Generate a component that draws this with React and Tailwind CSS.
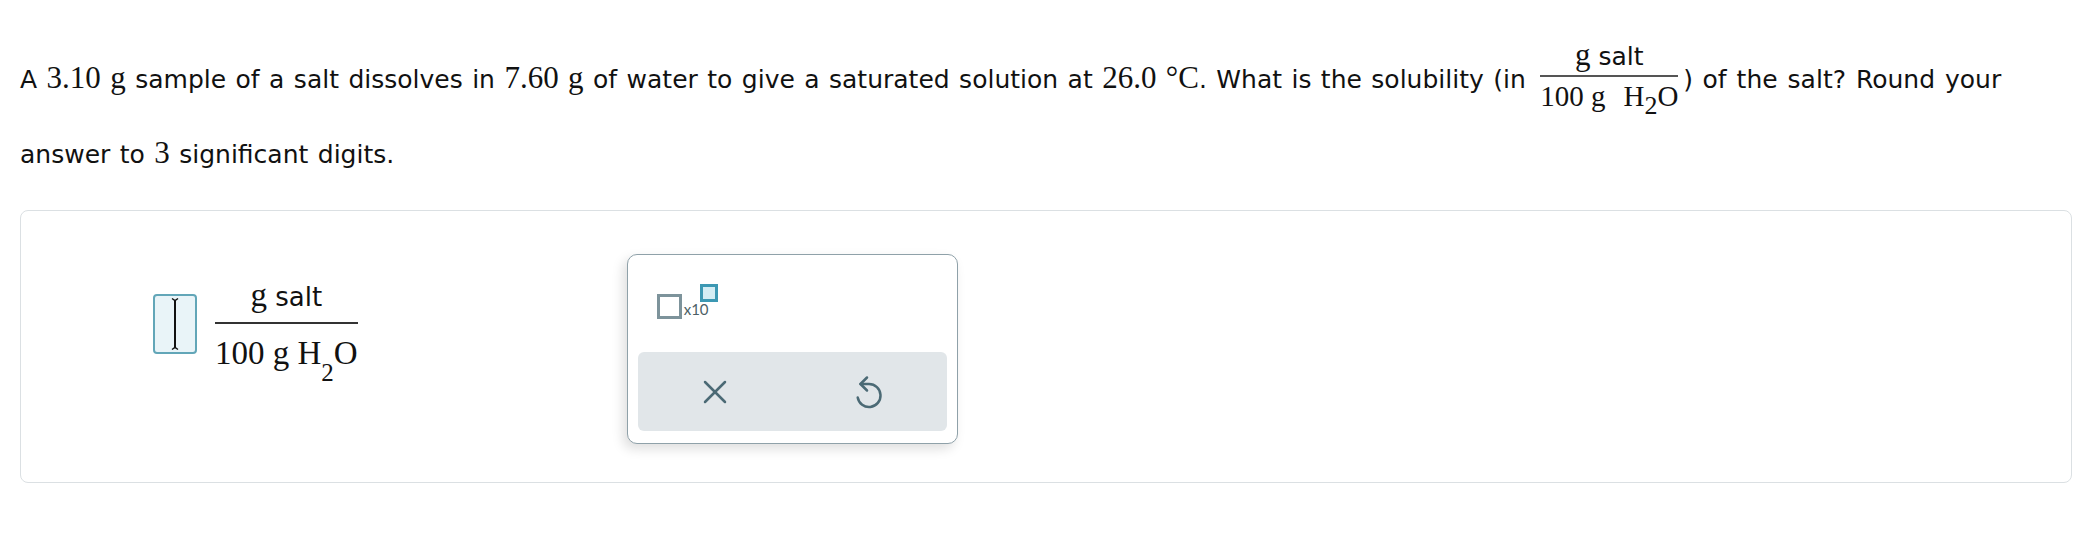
import React from "react";

// serif numbers / units used inside the question text
const Num = ({ children, className = "" }) => (
  <span className={`font-['Liberation_Serif','Times_New_Roman',serif] leading-none ${className}`}>
    {children}
  </span>
);

// fraction inside the question sentence
const InlineFraction = () => (
  <span className="inline-flex flex-col items-center align-[23px] px-[5px] [word-spacing:0px]">
    <span className="block leading-none text-[25px]">
      <Num className="text-[31px]">g</Num> salt
    </span>
    <span className="block h-[2px] w-full bg-[#555] mt-[4.5px]" />
    <span className="block leading-none mt-[5px] whitespace-nowrap">
      <Num className="text-[29px]">
        100 g<span className="ml-[18px]">H</span>
        <span className="relative top-[8px] text-[26px]">2</span>O
      </Num>
    </span>
  </span>
);

// the answer box with the text cursor
const AnswerBox = () => (
  <div className="mt-[15px] w-[44px] h-[60px] rounded-[4px] border-2 border-[#62a6b8] bg-[#e9f4f8] flex items-center justify-center">
    <svg width="12" height="54" viewBox="0 0 12 54" fill="none" stroke="#111" strokeWidth="1.5">
      <path d="M3 1.5 L6 3.5 L9 1.5" />
      <path d="M6 3 V51" strokeWidth="2" />
      <path d="M3 52.5 L6 50.5 L9 52.5" />
    </svg>
  </div>
);

const CloseIcon = () => (
  <svg width="24" height="24" viewBox="0 0 24 24" fill="none" stroke="#4b6a75" strokeWidth="2.5" strokeLinecap="round">
    <path d="M2 2 L22 22" />
    <path d="M22 2 L2 22" />
  </svg>
);

const UndoIcon = () => (
  <svg width="30" height="34" viewBox="0 0 30 34" fill="none" stroke="#4b6a75" strokeWidth="2.5" strokeLinecap="round" strokeLinejoin="round">
    <path d="M13 2.5 L6.5 9 L13 15.5" />
    <path d="M6.5 9 H15 A11.5 11.5 0 1 1 3.7 22.5" />
  </svg>
);

const App = () => {
  return (
    <div className="w-[2092px] min-h-[552px] bg-white px-[20px] text-[#111] font-['DejaVu_Sans',Verdana,sans-serif]">
      {/* Question */}
      <p className="pt-[39px] text-[25px] leading-[74.5px] whitespace-nowrap [word-spacing:1.5px]">
        A <Num className="text-[31px]">3.10</Num> <Num className="text-[31px]">g</Num> sample of a salt
        dissolves in <Num className="text-[31px]">7.60</Num> <Num className="text-[31px]">g</Num> of water
        to give a saturated solution at <Num className="text-[31px]">26.0</Num>{" "}
        <Num className="text-[31px]">°C</Num>. What is the solubility (in <InlineFraction />){" "}
        <span className="[word-spacing:2px]">of the salt? Round your</span>
        <br />
        answer to <Num className="text-[31px]">3</Num> significant digits.
      </p>

      {/* Answer card */}
      <div className="mt-[18px] h-[273px] rounded-[8px] border border-[#dbe0e3] flex items-start">
        <div className="mt-[68px] ml-[132px] flex items-start gap-[13px]">
          <AnswerBox />
          <div className="flex flex-col items-center px-[5px]">
            <div className="leading-none text-[26px]">
              <Num className="text-[33px]">g</Num> salt
            </div>
            <div className="h-[2px] w-full bg-[#333] mt-[10px]" />
            <div className="leading-none mt-[13px] whitespace-nowrap">
              <Num className="text-[33px]">
                100 g H<span className="relative top-[17px] text-[25px]">2</span>O
              </Num>
            </div>
          </div>
        </div>

        {/* Tool palette */}
        <div className="ml-[264px] mt-[43px] w-[331px] h-[190px] rounded-[10px] border border-[#8fa1a9] bg-white shadow-[-4px_5px_12px_rgba(0,0,0,0.13)] flex flex-col">
          <div className="h-[97px] pl-[29px] pt-[39px] flex items-start">
            <div className="relative flex items-end">
              <div className="w-[25px] h-[25px] border-[3px] border-[#7d939b]" />
              <span className="ml-[2px] mb-[2px] text-[15px] leading-none text-[#4d5f66] font-['Lato','Open_Sans',sans-serif]">
                x10
              </span>
              <div className="absolute left-[43px] top-[-10px] w-[18px] h-[18px] border-[3px] border-[#3c98b3] bg-[#d4edf4]" />
            </div>
          </div>
          <div className="mx-[10px] h-[79px] rounded-[6px] bg-[#e1e6e9] flex">
            <button className="flex-1 flex items-center justify-center">
              <CloseIcon />
            </button>
            <button className="flex-1 flex items-center justify-center">
              <UndoIcon />
            </button>
          </div>
        </div>
      </div>
    </div>
  );
};

export default App;
